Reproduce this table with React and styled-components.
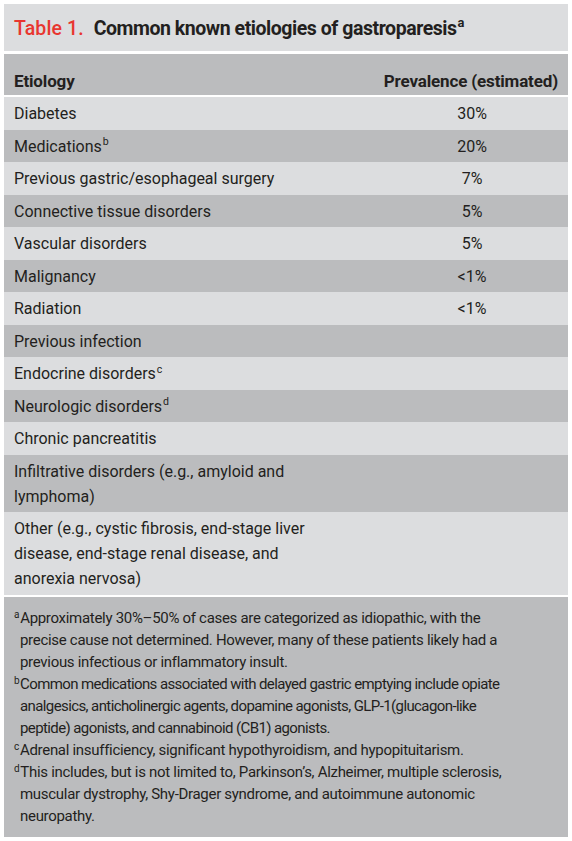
import styled, { createGlobalStyle } from "styled-components";

const GlobalStyle = createGlobalStyle`
    body{
        margin: 0;
        background: #ffffff;
        font-family: Roboto, "Liberation Sans", sans-serif;
        color: #231f20;
    }
`;

const light = "#dcdddf";
const dark = "#bbbcbe";

const rows = [
    { name: "Diabetes", value: "30%" },
    { name: "Medications", sup: "b", value: "20%" },
    { name: "Previous gastric/esophageal surgery", value: "7%" },
    { name: "Connective tissue disorders", value: "5%" },
    { name: "Vascular disorders", value: "5%" },
    { name: "Malignancy", value: "<1%" },
    { name: "Radiation", value: "<1%" },
    { name: "Previous infection" },
    { name: "Endocrine disorders", sup: "c" },
    { name: "Neurologic disorders", sup: "d" },
    { name: "Chronic pancreatitis" },
    { lines: ["Infiltrative disorders (e.g., amyloid and", "lymphoma)"] },
    { lines: ["Other (e.g., cystic fibrosis, end-stage liver", "disease, end-stage renal disease, and", "anorexia nervosa)"] },
];

const notes = [
    { mark: "a", lines: [
        "Approximately 30%–50% of cases are categorized as idiopathic, with the",
        "precise cause not determined. However, many of these patients likely had a",
        "previous infectious or inflammatory insult.",
    ] },
    { mark: "b", tight: true, lines: [
        "Common medications associated with delayed gastric emptying include opiate",
        "analgesics, anticholinergic agents, dopamine agonists, GLP-1(glucagon-like",
        "peptide) agonists, and cannabinoid (CB1) agonists.",
    ] },
    { mark: "c", lines: [
        "Adrenal insufficiency, significant hypothyroidism, and hypopituitarism.",
    ] },
    { mark: "d", lines: [
        "This includes, but is not limited to, Parkinson’s, Alzheimer, multiple sclerosis,",
        "muscular dystrophy, Shy-Drager syndrome, and autoimmune autonomic",
        "neuropathy.",
    ] },
];

export default function App(){
    return (
        <>
            <GlobalStyle />
            <Table>
                <Caption>
                    <Label>Table 1.</Label>
                    <Heading>Common known etiologies of gastroparesis<Sup>a</Sup></Heading>
                </Caption>
                <HeaderRow>
                    <Cell>Etiology</Cell>
                    <Cell>Prevalence (estimated)</Cell>
                </HeaderRow>
                <Body>
                    {rows.map((r, i) => (
                        <Row key={i} shade={i % 2 === 0 ? light : dark}>
                            <Cell>
                                {r.lines
                                    ? r.lines.map((l, j) => <Line key={j}>{l}</Line>)
                                    : <>{r.name}{r.sup && <Sup>{r.sup}</Sup>}</>}
                            </Cell>
                            <Value>{r.value}</Value>
                        </Row>
                    ))}
                </Body>
                <Notes>
                    {notes.map(n => (
                        <Note key={n.mark}>
                            {n.lines.map((l, j) => (
                                <NoteLine key={j} first={j === 0} tight={n.tight}>
                                    {j === 0 && <Mark>{n.mark}</Mark>}{l}
                                </NoteLine>
                            ))}
                        </Note>
                    ))}
                </Notes>
            </Table>
        </>
    );
}

const Table = styled.div`
    width: 564px;
    margin: 4px;
    display: flex;
    flex-direction: column;
`;

const Caption = styled.div`
    height: 47px;
    background: ${light};
    padding: 2px 10px 0;
    box-sizing: border-box;
    display: flex;
    align-items: center;
    gap: 10px;
    font-size: 19.5px;
    letter-spacing: -0.45px;
`;

const Label = styled.span`
    color: #e8362f;
    font-weight: 500;
    letter-spacing: 0.1px;
`;

const Heading = styled.span`
    color: #231f20;
    font-weight: 700;
`;

const Sup = styled.sup`
    font-size: 0.66em;
    line-height: 0;
    vertical-align: 0.6em;
    letter-spacing: 0;
    margin-left: 1px;
`;

const HeaderRow = styled.div`
    margin-top: 3px;
    background: ${dark};
    padding: 15px 10px 1px;
    display: flex;
    justify-content: space-between;
    line-height: 25px;
    font-size: 17px;
    font-weight: 700;
    letter-spacing: -0.15px;
`;

const Body = styled.div`
    margin-top: 2px;
    display: flex;
    flex-direction: column;
`;

const Row = styled.div`
    background: ${props => props.shade};
    padding: 4px 10px 3.5px;
    display: grid;
    grid-template-columns: 1fr 172px;
    line-height: 25px;
    font-size: 16px;
    letter-spacing: 0;
`;

const Cell = styled.div`
    white-space: nowrap;
`;

const Line = styled.div``;

const Value = styled.div`
    text-align: center;
`;

const Notes = styled.div`
    margin-top: 2px;
    background: ${dark};
    padding: 10px 10px 10px 16px;
    font-size: 15px;
    line-height: 22px;
    letter-spacing: -0.3px;
`;

const Note = styled.div``;

const NoteLine = styled.div`
    white-space: nowrap;
    margin-left: ${props => props.first ? "-6px" : "0"};
    letter-spacing: ${props => props.tight ? "-0.6px" : "inherit"};
`;

const Mark = styled.sup`
    font-size: 10px;
    line-height: 0;
    vertical-align: 5px;
    margin-right: 1px;
`;
